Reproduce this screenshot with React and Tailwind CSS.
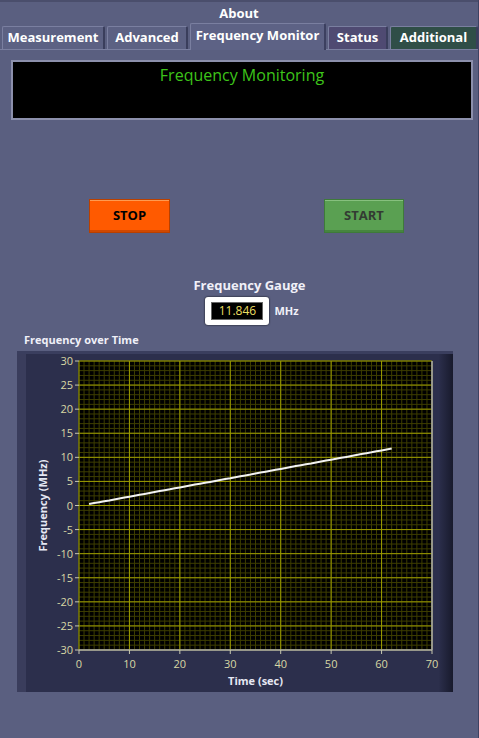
import React from 'react';

const font = { fontFamily: '"Open Sans", "Noto Sans", sans-serif' };

// plot geometry inside the chart frame svg
const PX0 = 62;
const PX1 = 415;
const PY0 = 10;
const PY1 = 299;
const xOf = (t) => PX0 + ((PX1 - PX0) * t) / 70;
const yOf = (v) => PY0 + ((PY1 - PY0) * (30 - v)) / 60;

const tabs = [
  { label: 'Measurement', w: 'w-[103px]', cls: 'bg-[#5c6183]' },
  { label: 'Advanced', w: 'w-[81px]', cls: 'bg-[#5c6183]' },
  { label: 'Frequency Monitor', w: 'w-[136px]', cls: 'bg-[#5d6285]', active: true },
  { label: 'Status', w: 'w-[60px]', cls: 'bg-[#4f4a72]' },
  { label: 'Additional', w: 'w-[88px]', cls: 'bg-[#2f4e47]' },
];

const FrequencyChart = () => {
  const minorX = Array.from({ length: 71 }, (_, i) => i);
  const minorY = Array.from({ length: 61 }, (_, i) => i - 30);
  const xTicks = [0, 10, 20, 30, 40, 50, 60, 70];
  const yTicks = [30, 25, 20, 15, 10, 5, 0, -5, -10, -15, -20, -25, -30];

  const pts = [];
  for (let t = 2; t <= 62; t += 1) {
    pts.push(`${xOf(t).toFixed(1)},${yOf(0.3 + 0.192 * (t - 2)).toFixed(1)}`);
  }

  return (
    <svg width="436" height="341" viewBox="0 0 436 341" style={font}>
      <defs>
        <linearGradient id="frameR" x1="0" x2="1" y1="0" y2="0">
          <stop offset="0" stopColor="#2b2e4b" />
          <stop offset="1" stopColor="#181a2c" />
        </linearGradient>
      </defs>
      <rect x="0" y="0" width="436" height="341" fill="#2c2f4c" />
      <rect x="0" y="0" width="9" height="341" fill="#3a3d5c" />
      <rect x="422" y="0" width="14" height="341" fill="url(#frameR)" />
      <rect x="0" y="0" width="436" height="3" fill="#3a3e5e" />

      <rect x={PX0} y={PY0} width={PX1 - PX0} height={PY1 - PY0} fill="#000" />
      {minorX.map((t) => (
        <line key={'mx' + t} x1={xOf(t)} x2={xOf(t)} y1={PY0} y2={PY1} stroke="#3e3e00" strokeWidth="1" />
      ))}
      {minorY.map((v) => (
        <line key={'my' + v} x1={PX0} x2={PX1} y1={yOf(v)} y2={yOf(v)} stroke="#3e3e00" strokeWidth="1" />
      ))}
      {xTicks.map((t) => (
        <line key={'Mx' + t} x1={xOf(t)} x2={xOf(t)} y1={PY0} y2={PY1} stroke="#9c9c00" strokeWidth="1" />
      ))}
      {yTicks.map((v) => (
        <line key={'My' + v} x1={PX0} x2={PX1} y1={yOf(v)} y2={yOf(v)} stroke="#9c9c00" strokeWidth="1" />
      ))}
      <line x1={PX1} x2={PX1} y1={PY0} y2={PY1} stroke="#a9a9b4" strokeWidth="1.5" />
      <line x1={PX0} x2={PX1} y1={PY1} y2={PY1} stroke="#a9a9b4" strokeWidth="1.5" />

      <polyline points={pts.join(' ')} fill="none" stroke="#f2f2f2" strokeWidth="2" />

      {yTicks.map((v) => (
        <g key={'yl' + v}>
          <line x1={PX0 - 4} x2={PX0} y1={yOf(v)} y2={yOf(v)} stroke="#c8c8b0" strokeWidth="1" />
          <text x={PX0 - 6} y={yOf(v) + 4} textAnchor="end" fontSize="11" fill="#d8d8a4">
            {v}
          </text>
        </g>
      ))}
      {xTicks.map((t) => (
        <g key={'xl' + t}>
          <line x1={xOf(t)} x2={xOf(t)} y1={PY1} y2={PY1 + 4} stroke="#c8c8b0" strokeWidth="1" />
          <text x={xOf(t)} y={PY1 + 18} textAnchor="middle" fontSize="11" fill="#d8d8a4">
            {t}
          </text>
        </g>
      ))}
      <text x={(PX0 + PX1) / 2} y={334} textAnchor="middle" fontSize="11" fontWeight="700" fill="#e6e8f4">
        Time (sec)
      </text>
      <text
        x="0"
        y="0"
        transform={`translate(30 ${yOf(0)}) rotate(-90)`}
        textAnchor="middle"
        fontSize="11"
        fontWeight="700"
        fill="#e6e8f4"
      >
        Frequency (MHz)
      </text>
    </svg>
  );
};

export default function App() {
  return (
    <div className="w-[479px] h-[738px] bg-[#5a5f80] overflow-hidden flex" style={font}>
      <div className="flex-1 flex flex-col">
        {/* About header */}
        <div className="h-[24px] flex items-end justify-center border-t-2 border-[#4a4e6c]">
          <span className="text-white font-bold text-[13px] leading-none pb-[4px]">About</span>
        </div>

        {/* Tabs */}
        <div className="h-[25px] flex items-end pl-[2px] gap-[2px]">
          {tabs.map((tab) =>
            tab.active ? (
              <div
                key={tab.label}
                className={`${tab.w} h-[27px] ${tab.cls} flex items-center justify-center rounded-t-[2px] border-t border-l border-[#7a7fa0] border-r-2 border-r-[#3c4060] -mb-[1px] relative z-10`}
              >
                <span className="text-white font-bold text-[13px] pb-[3px]">{tab.label}</span>
              </div>
            ) : (
              <div
                key={tab.label}
                className={`${tab.w} h-[23px] ${tab.cls} flex items-center justify-center rounded-t-[2px] border-t border-l border-[#7a7fa0] border-r-2 border-r-[#3a3e5c]`}
              >
                <span className="text-white font-bold text-[13px]">{tab.label}</span>
              </div>
            )
          )}
        </div>

        {/* Content panel */}
        <div className="flex-1 flex flex-col border-t border-[#7a7fa0]">
          <div className="mt-[10px] ml-[11px] mr-[5px] h-[60px] bg-black border-2 border-[#8c90ac] flex justify-center">
            <span className="text-[#3dc41a] text-[16px] leading-[20px] mt-[3px]">Frequency Monitoring</span>
          </div>

          <div className="mt-[79px] flex h-[34px]">
            <button className="ml-[89px] w-[81px] h-[34px] bg-[#ff5a00] border border-[#b84000] shadow-[inset_0_1px_0_#ff9a50,inset_0_-2px_0_#d04800] text-black font-bold text-[13px]">
              STOP
            </button>
            <button className="ml-[154px] w-[80px] h-[34px] bg-[#5aa052] border border-[#3e7a3a] shadow-[inset_0_1px_0_#86c07e,inset_0_-2px_0_#46853f] text-[#333b33] font-bold text-[13px]">
              START
            </button>
          </div>

          <div className="mt-[44px] flex flex-col items-center">
            <span className="text-[#f0f0f8] font-bold text-[13px] leading-[16px] pl-[21px]">Frequency Gauge</span>
            <div className="flex items-center mt-[4px] pl-[26px]">
              <div className="w-[64px] h-[28px] bg-white rounded-[3px] flex items-center justify-center shadow-[0_0_2px_#000]">
                <div className="w-[52px] h-[18px] bg-black border border-[#666] flex items-center justify-center">
                  <span className="text-[#ecdf62] text-[12px] leading-none">11.846</span>
                </div>
              </div>
              <span className="ml-[5px] text-[#f0f0f8] font-bold text-[11px]">MHz</span>
            </div>
          </div>

          <div className="mt-[7px] pl-[24px] h-[17px] flex items-center">
            <span className="text-[#f0f0f8] font-bold text-[11px]">Frequency over Time</span>
          </div>
          <div className="ml-[17px] mt-[2px] w-[436px] h-[341px]">
            <FrequencyChart />
          </div>
        </div>
      </div>
      <div className="w-[3px] bg-[#3e4262]" />
    </div>
  );
}
